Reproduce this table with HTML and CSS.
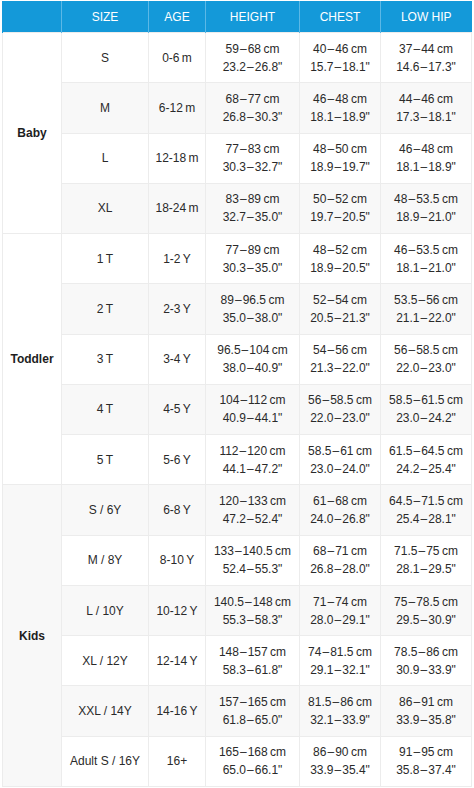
FILE: index.html
```html
<!DOCTYPE html>
<html>
<head>
<meta charset="utf-8">
<link rel="stylesheet" href="styles.css">
</head>
<body>
<table class="chart">
<colgroup>
<col class="c-group"><col class="c-size"><col class="c-age"><col class="c-height"><col class="c-chest"><col class="c-hip">
</colgroup>
<thead>
<tr><th></th><th>SIZE</th><th>AGE</th><th>HEIGHT</th><th>CHEST</th><th>LOW HIP</th></tr>
</thead>
<tbody>
<tr><td class="group" rowspan="4">Baby</td><td>S</td><td>0-6&#8201;m</td><td>59&#8202;–&#8202;68&#8201;cm<br>23.2&#8202;–&#8202;26.8"</td><td>40&#8202;–&#8202;46&#8201;cm<br>15.7&#8202;–&#8202;18.1"</td><td>37&#8202;–&#8202;44&#8201;cm<br>14.6&#8202;–&#8202;17.3"</td></tr>
<tr><td>M</td><td>6-12&#8201;m</td><td>68&#8202;–&#8202;77&#8201;cm<br>26.8&#8202;–&#8202;30.3"</td><td>46&#8202;–&#8202;48&#8201;cm<br>18.1&#8202;–&#8202;18.9"</td><td>44&#8202;–&#8202;46&#8201;cm<br>17.3&#8202;–&#8202;18.1"</td></tr>
<tr><td>L</td><td>12-18&#8201;m</td><td>77&#8202;–&#8202;83&#8201;cm<br>30.3&#8202;–&#8202;32.7"</td><td>48&#8202;–&#8202;50&#8201;cm<br>18.9&#8202;–&#8202;19.7"</td><td>46&#8202;–&#8202;48&#8201;cm<br>18.1&#8202;–&#8202;18.9"</td></tr>
<tr><td>XL</td><td>18-24&#8201;m</td><td>83&#8202;–&#8202;89&#8201;cm<br>32.7&#8202;–&#8202;35.0"</td><td>50&#8202;–&#8202;52&#8201;cm<br>19.7&#8202;–&#8202;20.5"</td><td>48&#8202;–&#8202;53.5&#8201;cm<br>18.9&#8202;–&#8202;21.0"</td></tr>
<tr><td class="group" rowspan="5">Toddler</td><td>1&#8201;T</td><td>1-2&#8201;Y</td><td>77&#8202;–&#8202;89&#8201;cm<br>30.3&#8202;–&#8202;35.0"</td><td>48&#8202;–&#8202;52&#8201;cm<br>18.9&#8202;–&#8202;20.5"</td><td>46&#8202;–&#8202;53.5&#8201;cm<br>18.1&#8202;–&#8202;21.0"</td></tr>
<tr><td>2&#8201;T</td><td>2-3&#8201;Y</td><td>89&#8202;–&#8202;96.5&#8201;cm<br>35.0&#8202;–&#8202;38.0"</td><td>52&#8202;–&#8202;54&#8201;cm<br>20.5&#8202;–&#8202;21.3"</td><td>53.5&#8202;–&#8202;56&#8201;cm<br>21.1&#8202;–&#8202;22.0"</td></tr>
<tr><td>3&#8201;T</td><td>3-4&#8201;Y</td><td>96.5&#8202;–&#8202;104&#8201;cm<br>38.0&#8202;–&#8202;40.9"</td><td>54&#8202;–&#8202;56&#8201;cm<br>21.3&#8202;–&#8202;22.0"</td><td>56&#8202;–&#8202;58.5&#8201;cm<br>22.0&#8202;–&#8202;23.0"</td></tr>
<tr><td>4&#8201;T</td><td>4-5&#8201;Y</td><td>104&#8202;–&#8202;112&#8201;cm<br>40.9&#8202;–&#8202;44.1"</td><td>56&#8202;–&#8202;58.5&#8201;cm<br>22.0&#8202;–&#8202;23.0"</td><td>58.5&#8202;–&#8202;61.5&#8201;cm<br>23.0&#8202;–&#8202;24.2"</td></tr>
<tr><td>5&#8201;T</td><td>5-6&#8201;Y</td><td>112&#8202;–&#8202;120&#8201;cm<br>44.1&#8202;–&#8202;47.2"</td><td>58.5&#8202;–&#8202;61&#8201;cm<br>23.0&#8202;–&#8202;24.0"</td><td>61.5&#8202;–&#8202;64.5&#8201;cm<br>24.2&#8202;–&#8202;25.4"</td></tr>
<tr><td class="group" rowspan="6">Kids</td><td>S / 6Y</td><td>6-8&#8201;Y</td><td>120&#8202;–&#8202;133&#8201;cm<br>47.2&#8202;–&#8202;52.4"</td><td>61&#8202;–&#8202;68&#8201;cm<br>24.0&#8202;–&#8202;26.8"</td><td>64.5&#8202;–&#8202;71.5&#8201;cm<br>25.4&#8202;–&#8202;28.1"</td></tr>
<tr><td>M / 8Y</td><td>8-10&#8201;Y</td><td>133&#8202;–&#8202;140.5&#8201;cm<br>52.4&#8202;–&#8202;55.3"</td><td>68&#8202;–&#8202;71&#8201;cm<br>26.8&#8202;–&#8202;28.0"</td><td>71.5&#8202;–&#8202;75&#8201;cm<br>28.1&#8202;–&#8202;29.5"</td></tr>
<tr><td>L / 10Y</td><td>10-12&#8201;Y</td><td>140.5&#8202;–&#8202;148&#8201;cm<br>55.3&#8202;–&#8202;58.3"</td><td>71&#8202;–&#8202;74&#8201;cm<br>28.0&#8202;–&#8202;29.1"</td><td>75&#8202;–&#8202;78.5&#8201;cm<br>29.5&#8202;–&#8202;30.9"</td></tr>
<tr><td>XL / 12Y</td><td>12-14&#8201;Y</td><td>148&#8202;–&#8202;157&#8201;cm<br>58.3&#8202;–&#8202;61.8"</td><td>74&#8202;–&#8202;81.5&#8201;cm<br>29.1&#8202;–&#8202;32.1"</td><td>78.5&#8202;–&#8202;86&#8201;cm<br>30.9&#8202;–&#8202;33.9"</td></tr>
<tr><td>XXL / 14Y</td><td>14-16&#8201;Y</td><td>157&#8202;–&#8202;165&#8201;cm<br>61.8&#8202;–&#8202;65.0"</td><td>81.5&#8202;–&#8202;86&#8201;cm<br>32.1&#8202;–&#8202;33.9"</td><td>86&#8202;–&#8202;91&#8201;cm<br>33.9&#8202;–&#8202;35.8"</td></tr>
<tr><td>Adult S / 16Y</td><td>16+</td><td>165&#8202;–&#8202;168&#8201;cm<br>65.0&#8202;–&#8202;66.1"</td><td>86&#8202;–&#8202;90&#8201;cm<br>33.9&#8202;–&#8202;35.4"</td><td>91&#8202;–&#8202;95&#8201;cm<br>35.8&#8202;–&#8202;37.4"</td></tr>
</tbody>
</table>
</body>
</html>
```
FILE: styles.css
```css
html, body {
  margin: 0;
  padding: 0;
  background: #ffffff;
}
body {
  padding: 1px 0 0 2px;
  font-family: "Liberation Sans", Arial, sans-serif;
  color: #2a2a2a;
}
.chart {
  border-collapse: collapse;
  table-layout: fixed;
  width: 469px;
  font-size: 12px;
}
.c-group { width: 59px; }
.c-size { width: 87px; }
.c-age { width: 57px; }
.c-height { width: 94px; }
.c-chest { width: 81px; }
.c-hip { width: 91px; }
.chart th {
  background: #1499d9;
  color: #ffffff;
  font-weight: normal;
  font-size: 12px;
  height: 31px;
  padding: 0;
  border-left: 1px solid #5cb8e6;
  text-align: center;
  vertical-align: middle;
}
.chart th:first-child {
  border-left: 1px solid #1499d9;
}
.chart td {
  border: 1px solid #ececec;
  padding: 0;
  text-align: center;
  vertical-align: middle;
  line-height: 18px;
  height: 49.27px;
  white-space: nowrap;
}
.chart tbody tr:nth-child(even) {
  background: #f8f8f8;
}
.chart tbody tr:nth-child(odd) {
  background: #ffffff;
}
.chart td.group {
  font-weight: bold;
  color: #1e1e1e;
}
```
